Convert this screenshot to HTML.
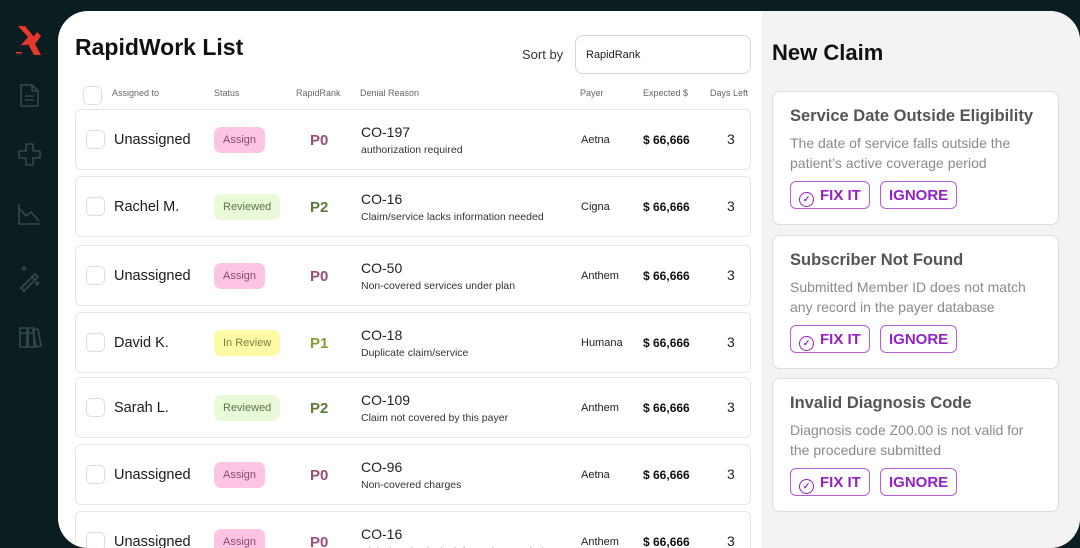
<!DOCTYPE html>
<html><head><meta charset="utf-8"><style>
*{margin:0;padding:0;box-sizing:border-box}
html,body{width:1080px;height:548px;overflow:hidden}
body{background:#0a1e21;font-family:"Liberation Sans",sans-serif;position:relative}
.wrap{position:absolute;left:58px;top:11px;width:1022px;height:537px;background:#fff;border-radius:30px;overflow:hidden}
.in{position:absolute;left:-58px;top:-11px;width:1080px;height:548px}
.right{position:absolute;left:762px;top:0;width:318px;height:548px;background:#f3f3f3}
.abs{position:absolute}
h1{position:absolute;left:75px;top:34px;font-size:23px;font-weight:bold;color:#111}
.sort{position:absolute;left:522px;top:47px;font-size:13px;color:#333}
.sel{position:absolute;left:575px;top:35px;width:176px;height:39px;border:1px solid #d6d6d6;border-radius:8px;font-size:11px;color:#222;padding:13px 0 0 10px}
.hd{position:absolute;top:88px;font-size:9px;color:#666}
.cb{position:absolute;width:19px;height:19px;border:1px solid #ddd;border-radius:5px;background:#fff}
.row{position:absolute;left:75px;width:676px;height:61px;border:1px solid #e6e6e6;border-radius:6px}
.name{position:absolute;left:38px;font-size:14.5px;color:#1a1a1a}
.pill{position:absolute;left:138px;height:26px;border-radius:7px;font-size:11px;padding:7px 9px 0}
.rank{position:absolute;left:234px;font-size:15px;font-weight:bold}
.code{position:absolute;left:285px;top:14px;font-size:14px;color:#222}
.desc{position:absolute;left:285px;top:34px;font-size:10.5px;color:#333}
.payer{position:absolute;left:505px;top:24px;font-size:11px;color:#222}
.amt{position:absolute;left:567px;top:23px;font-size:12px;font-weight:bold;color:#111}
.days{position:absolute;left:651px;top:21px;font-size:14px;color:#222}
.card{position:absolute;left:772px;width:287px;height:134px;background:#fff;border:1px solid #ddd;border-radius:8px}
.ct{position:absolute;left:17px;top:15px;font-size:16.5px;font-weight:bold;color:#555}
.cd{position:absolute;left:17px;top:42px;font-size:14px;line-height:19.5px;color:#8a8a8a;width:252px}
.btn{position:absolute;top:89px;height:28px;border:1px solid #b25fd8;border-radius:6px;color:#9421c4;font-size:15px;font-weight:bold;padding:5px 8px 0}
.ck{display:inline-block;width:15px;height:15px;border:1.5px solid #9421c4;border-radius:50%;font-size:9px;text-align:center;line-height:12px;vertical-align:-2px;margin-right:6px}
</style></head><body>
<svg class="abs" style="left:0;top:0" width="50" height="60" viewBox="0 0 50 60">
<polygon points="18,26 25,26 34,37 27,45 21,45 28,37" fill="#e8372b"/>
<polygon points="37,32 41,36 35,44 41,55 34,55 28,44" fill="#e8372b"/>
<rect x="16" y="52" width="6" height="1.5" fill="#e8372b"/>
</svg>
<svg class="abs" style="left:16px;top:82px" width="28" height="290" viewBox="0 0 28 290" fill="none" stroke="#33494c" stroke-width="1.6" stroke-linejoin="round">
<path d="M5 3h11l6 6v15H5z M16 3v6h6 M9 14h9 M9 18h9"/>
<path d="M10 62h7v7h7v7h-7v7h-7v-7H3v-7h7z"/>
<path d="M3 122v20h21 M4 127l6 7 5-4 8 9"/>
<path d="M5 206l14-14 3 3-14 14z M16 195l3 3 M8 184v5 M5.5 186.5h5 M21 199v5 M18.5 201.5h5 M10 200v3"/>
<path d="M4 246h7v19H4z M12 246h6v19h-6z M17 248l5 -1 3 17-5 1z M4 251h7 M12 251h6"/>
</svg>
<div class="wrap"><div class="in">
<div class="right"></div>
<h1>RapidWork List</h1>
<div class="sort">Sort by</div>
<div class="sel">RapidRank</div>
<div class="cb" style="left:83px;top:86px"></div>
<div class="hd" style="left:112px">Assigned to</div>
<div class="hd" style="left:214px">Status</div>
<div class="hd" style="left:296px">RapidRank</div>
<div class="hd" style="left:360px">Denial Reason</div>
<div class="hd" style="left:580px">Payer</div>
<div class="hd" style="left:643px">Expected $</div>
<div class="hd" style="left:710px">Days Left</div>

<div class="row" style="top:109px"><div class="cb" style="left:10px;top:20px"></div><div class="name" style="top:22px">Unassigned</div><div class="pill" style="top:17px;background:#fdc5e3;color:#8e4a6e">Assign</div><div class="rank" style="top:22px;color:#9a4f78">P0</div><div class="code">CO-197</div><div class="desc">authorization required</div><div class="payer">Aetna</div><div class="amt">$ 66,666</div><div class="days">3</div></div>
<div class="row" style="top:176px"><div class="cb" style="left:10px;top:20px"></div><div class="name" style="top:22px">Rachel M.</div><div class="pill" style="top:17px;background:#e9fad9;color:#5c7247">Reviewed</div><div class="rank" style="top:22px;color:#5c7a3a">P2</div><div class="code">CO-16</div><div class="desc">Claim/service lacks information needed</div><div class="payer">Cigna</div><div class="amt">$ 66,666</div><div class="days">3</div></div>
<div class="row" style="top:245px"><div class="cb" style="left:10px;top:20px"></div><div class="name" style="top:22px">Unassigned</div><div class="pill" style="top:17px;background:#fdc5e3;color:#8e4a6e">Assign</div><div class="rank" style="top:22px;color:#9a4f78">P0</div><div class="code">CO-50</div><div class="desc">Non-covered services under plan</div><div class="payer">Anthem</div><div class="amt">$ 66,666</div><div class="days">3</div></div>
<div class="row" style="top:312px"><div class="cb" style="left:10px;top:20px"></div><div class="name" style="top:22px">David K.</div><div class="pill" style="top:17px;background:#fdfaa5;color:#7f7d3c">In Review</div><div class="rank" style="top:22px;color:#8a9a3a">P1</div><div class="code">CO-18</div><div class="desc">Duplicate claim/service</div><div class="payer">Humana</div><div class="amt">$ 66,666</div><div class="days">3</div></div>
<div class="row" style="top:377px"><div class="cb" style="left:10px;top:20px"></div><div class="name" style="top:22px">Sarah L.</div><div class="pill" style="top:17px;background:#e9fad9;color:#5c7247">Reviewed</div><div class="rank" style="top:22px;color:#5c7a3a">P2</div><div class="code">CO-109</div><div class="desc">Claim not covered by this payer</div><div class="payer">Anthem</div><div class="amt">$ 66,666</div><div class="days">3</div></div>
<div class="row" style="top:444px"><div class="cb" style="left:10px;top:20px"></div><div class="name" style="top:22px">Unassigned</div><div class="pill" style="top:17px;background:#fdc5e3;color:#8e4a6e">Assign</div><div class="rank" style="top:22px;color:#9a4f78">P0</div><div class="code">CO-96</div><div class="desc">Non-covered charges</div><div class="payer">Aetna</div><div class="amt">$ 66,666</div><div class="days">3</div></div>
<div class="row" style="top:511px"><div class="cb" style="left:10px;top:20px"></div><div class="name" style="top:22px">Unassigned</div><div class="pill" style="top:17px;background:#fdc5e3;color:#8e4a6e">Assign</div><div class="rank" style="top:22px;color:#9a4f78">P0</div><div class="code">CO-16</div><div class="desc">Claim/service lacks information needed</div><div class="payer">Anthem</div><div class="amt">$ 66,666</div><div class="days">3</div></div>

<div class="abs" style="left:772px;top:40px;font-size:22px;font-weight:bold;color:#111">New Claim</div>
<div class="card" style="top:91px"><div class="ct">Service Date Outside Eligibility</div><div class="cd">The date of service falls outside the patient’s active coverage period</div><div class="btn" style="left:17px"><span class="ck">✓</span>FIX IT</div><div class="btn" style="left:107px">IGNORE</div></div>
<div class="card" style="top:235px"><div class="ct">Subscriber Not Found</div><div class="cd">Submitted Member ID does not match any record in the payer database</div><div class="btn" style="left:17px"><span class="ck">✓</span>FIX IT</div><div class="btn" style="left:107px">IGNORE</div></div>
<div class="card" style="top:378px"><div class="ct">Invalid Diagnosis Code</div><div class="cd">Diagnosis code Z00.00 is not valid for the procedure submitted</div><div class="btn" style="left:17px"><span class="ck">✓</span>FIX IT</div><div class="btn" style="left:107px">IGNORE</div></div>
</div></div>
</body></html>
